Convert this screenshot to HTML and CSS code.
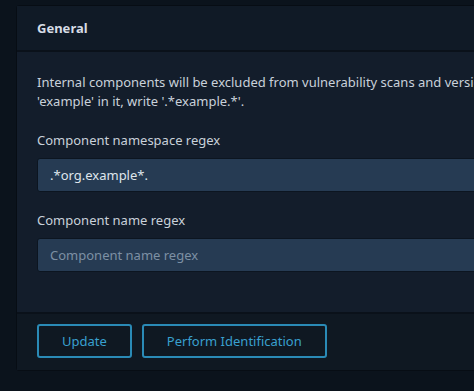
FILE: index.html
```html
<!DOCTYPE html>
<html lang="en">
<head>
    <meta charset="UTF-8">
    <title>General</title>
    <link rel="stylesheet" href="styles.css">
</head>
<body>

    <div class="card">
        <div class="cardHeader">General</div>
        <div class="cardBody">
            <p class="hint">Internal components will be excluded from vulnerability scans and version checks that rely on external systems. To mark components with<br>'example' in it, write '.*example.*'.</p>
            <div class="field">
                <label for="ns">Component namespace regex</label>
                <input type="text" id="ns" value=".*org.example*.">
            </div>
            <div class="field">
                <label for="nm">Component name regex</label>
                <input type="text" id="nm" placeholder="Component name regex">
            </div>
        </div>
        <div class="cardFooter">
            <button class="btn">Update</button>
            <button class="btn">Perform Identification</button>
        </div>
    </div>

</body>
</html>
```

FILE: styles.css
```css
html {
    background-color: #0b131c;
}
body {
    margin: 0;
    padding: 5px 0 0 16px;
    overflow: hidden;
    font-family: "Noto Sans", "Open Sans", sans-serif;
    font-size: 13px;
    color: #c9d1da;
}
.card {
    width: 1100px;
    border: 1px solid #070d14;
    border-radius: 3px;
    background: #131d2b;
}
.card .cardHeader {
    height: 44px;
    line-height: 44px;
    padding: 0 20px;
    font-weight: bold;
    color: #d6dde5;
    background: #101a26;
    border-bottom: 2px solid #0a111a;
}
.card .cardBody {
    padding: 21px 20px 22px;
}
.hint {
    margin: 0 0 19px;
    line-height: 19px;
    white-space: nowrap;
}
.field {
    margin-bottom: 18px;
}
.field label {
    display: block;
    line-height: 20px;
    margin-bottom: 8px;
}
.field input {
    box-sizing: border-box;
    width: 100%;
    height: 34px;
    padding: 0 12px;
    border: 1px solid #0c1520;
    border-radius: 3px;
    background: #263b53;
    color: #dfe5ec;
    font: inherit;
}
.field input::placeholder {
    color: #7d90a4;
}
.field input:focus {
    outline: none;
}
.card .cardFooter {
    display: flex;
    gap: 10px;
    padding: 10px 20px 12px;
    background: #0f1822;
    border-top: 2px solid #0a111a;
}
.btn {
    min-width: 94px;
    height: 34px;
    padding: 0 23px;
    border: 2px solid #2a8ab6;
    border-radius: 3px;
    background: transparent;
    color: #39a0cf;
    font: inherit;
    font-size: 13px;
}
```
